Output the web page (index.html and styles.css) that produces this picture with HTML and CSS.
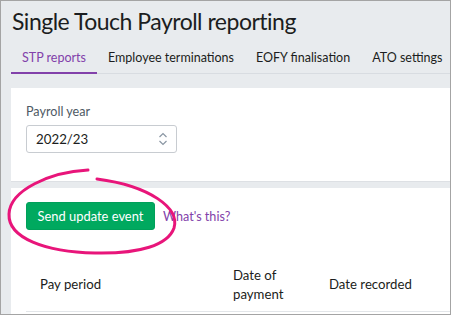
FILE: index.html
```html
<!DOCTYPE html>
<html>
<head>
<meta charset="utf-8">
<link rel="stylesheet" href="styles.css">
</head>
<body>
<div class="frame">
  <h1 class="title">Single Touch Payroll reporting</h1>
  <nav class="tabs">
    <a class="tab active">STP reports</a>
    <a class="tab">Employee terminations</a>
    <a class="tab">EOFY finalisation</a>
    <a class="tab">ATO settings</a>
  </nav>
  <section class="card card-filter">
    <label class="field-label">Payroll year</label>
    <div class="select">
      <span>2022/23</span>
      <svg class="chev" width="10" height="14" viewBox="0 0 10 14"><path d="M1.5 5 L5 1.5 L8.5 5 M1.5 9 L5 12.5 L8.5 9" fill="none" stroke="#8a96a3" stroke-width="1.2"/></svg>
    </div>
  </section>
  <section class="card card-main">
    <div class="actions">
      <button class="btn">Send update event</button>
      <a class="link">What's this?</a>
    </div>
    <div class="thead">
      <div class="th th-period">Pay period</div>
      <div class="th th-date">Date of<br>payment</div>
      <div class="th th-rec">Date recorded</div>
    </div>
  </section>
  <svg class="circle" width="451" height="315" viewBox="0 0 451 315">
    <path d="M88,170 C50,172 10,190 9,214 C8,238 45,252 95,253 C140,254 168,245 174,228 C180,208 150,186 97,179" fill="none" stroke="#e8157a" stroke-width="3" stroke-linecap="round"/>
  </svg>
</div>
</body>
</html>
```
FILE: styles.css
```css
* { box-sizing: border-box; }
body { margin: 0; font-family: Lato, "Noto Sans", sans-serif; }
.frame {
  position: relative;
  width: 451px;
  height: 315px;
  border: 1px solid #a4a4a4;
  background: #e8ebee;
  overflow: hidden;
}
.title {
  margin: 0;
  padding: 5px 0 0 11px;
  font-size: 23px;
  letter-spacing: -0.5px;
  font-weight: 400;
  color: #1b1d20;
  line-height: 30px;
}
.tabs {
  display: flex;
  margin: 8px 0 0 10px;
  border-bottom: 1px solid #d8dce1;
  height: 30px;
}
.tab {
  padding: 0 11px;
  font-size: 12.5px;
  line-height: 28px;
  color: #1b1d20;
  white-space: nowrap;
}
.tab.active {
  color: #8241aa;
  border-bottom: 2px solid #8241aa;
  margin-bottom: -1px;
}
.card {
  background: #fff;
  margin-left: 10px;
}
.card-filter {
  margin-top: 14px;
  height: 93px;
  padding: 15px 15px 0;
  box-shadow: 0 1px 0 #dde0e4;
}
.field-label {
  display: block;
  font-size: 12.6px;
  color: #4e5964;
  line-height: 18px;
}
.select {
  margin-top: 4px;
  width: 151px;
  height: 28px;
  border: 1px solid #c8ccd1;
  border-radius: 3px;
  display: flex;
  align-items: center;
  justify-content: space-between;
  padding: 0 8px 0 9px;
  font-size: 13.3px;
  color: #1b1d20;
}
.card-main {
  margin-top: 7px;
  height: 130px;
  padding: 14px 0 0 15px;
}
.actions {
  display: flex;
  align-items: center;
  gap: 8px;
}
.btn {
  font-family: inherit;
  height: 28px;
  width: 129px;
  border: 1px solid #00a05a;
  background: #00a95f;
  color: #fff;
  font-size: 12.9px;
  border-radius: 3px;
  padding: 0;
}
.link {
  font-size: 12.6px;
  color: #8241aa;
}
.thead {
  display: flex;
  align-items: center;
  margin-top: 28px;
  height: 54px;
  border-bottom: 1px solid #e3e6e9;
  font-size: 13.2px;
  color: #1b1d20;
  line-height: 19px;
}
.th-period { padding-left: 14px; width: 207px; }
.th-date { width: 96px; }
.circle {
  position: absolute;
  left: -1px;
  top: -1px;
  pointer-events: none;
}
```
